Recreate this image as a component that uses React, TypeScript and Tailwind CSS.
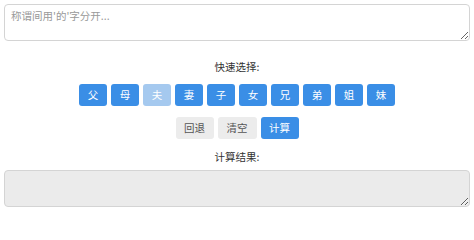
import { useState } from 'react';

const kin = ['父', '母', '夫', '妻', '子', '女', '兄', '弟', '姐', '妹'];

export default function App() {
  const [text, setText] = useState('');
  const [result] = useState('');

  return (
    <div className="flex flex-col items-center font-['Noto_Sans_CJK_SC',sans-serif] text-[10.5px] text-[#333]">
      <textarea
        value={text}
        onChange={(e) => setText(e.target.value)}
        placeholder="称谓间用'的'字分开..."
        className="mt-1 block h-[37px] w-[466px] rounded border border-[#d4d4d4] px-[6px] pt-[3px] text-[10.5px] leading-4 outline-none placeholder:text-[#999]"
      />

      <p className="mt-[18px] leading-4">快速选择:</p>

      <div className="mt-[9px] flex gap-1">
        {kin.map((k) => (
          <button
            key={k}
            type="button"
            disabled={k === '夫'}
            className={
              k === '夫'
                ? 'h-[22px] w-[28px] rounded-[3px] bg-[#a5c9ef] text-white'
                : 'h-[22px] w-[28px] rounded-[3px] bg-[#3a8ee6] text-white'
            }
          >
            {k}
          </button>
        ))}
      </div>

      <div className="mt-[11px] flex gap-1">
        <button type="button" className="h-[22px] w-[38px] rounded-[3px] bg-[#ececec] text-[#555]">
          回退
        </button>
        <button type="button" className="h-[22px] w-[39px] rounded-[3px] bg-[#ececec] text-[#555]">
          清空
        </button>
        <button type="button" className="h-[22px] w-[38px] rounded-[3px] bg-[#3a8ee6] text-white">
          计算
        </button>
      </div>

      <p className="mt-[10px] leading-4">计算结果:</p>

      <textarea
        readOnly
        value={result}
        className="mt-[5px] block h-[37px] w-[466px] rounded border border-[#d4d4d4] bg-[#ebebeb] px-[6px] pt-[3px] text-[10.5px] outline-none"
      />
    </div>
  );
}
